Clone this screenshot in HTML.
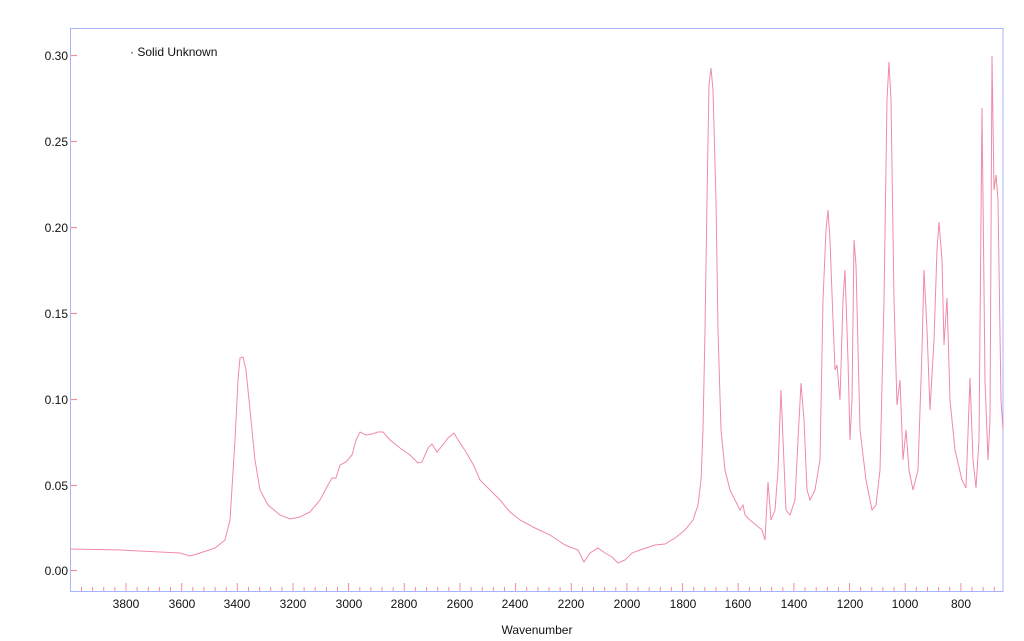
<!DOCTYPE html>
<html><head><meta charset="utf-8"><style>
html,body{margin:0;padding:0;background:#fff;}
svg{display:block;font-family:"Liberation Sans",Arial,sans-serif;}
</style></head><body>
<svg width="1024" height="641" viewBox="0 0 1024 641" xmlns="http://www.w3.org/2000/svg">
<rect x="70.5" y="28.5" width="932.5" height="563" fill="none" stroke="#a8b4ff" stroke-width="1"/>
<g stroke="#f0909a" stroke-width="1.2">
<line x1="71" y1="55.5" x2="77" y2="55.5"/><line x1="71" y1="141.5" x2="77" y2="141.5"/><line x1="71" y1="227.5" x2="77" y2="227.5"/><line x1="71" y1="313.5" x2="77" y2="313.5"/><line x1="71" y1="399.5" x2="77" y2="399.5"/><line x1="71" y1="485.5" x2="77" y2="485.5"/><line x1="71" y1="570.5" x2="77" y2="570.5"/>
</g>
<path stroke="#f0909a" stroke-width="1" fill="none" d="M81.5 591v-4M92.6 591v-4M103.7 591v-4M114.9 591v-4M126 591v-8M137.1 591v-4M148.3 591v-4M159.4 591v-4M170.5 591v-4M181.7 591v-8M192.8 591v-4M203.9 591v-4M215.1 591v-4M226.2 591v-4M237.3 591v-8M248.5 591v-4M259.6 591v-4M270.7 591v-4M281.9 591v-4M293 591v-8M304.1 591v-4M315.2 591v-4M326.4 591v-4M337.5 591v-4M348.6 591v-8M359.8 591v-4M370.9 591v-4M382 591v-4M393.2 591v-4M404.3 591v-8M415.4 591v-4M426.6 591v-4M437.7 591v-4M448.8 591v-4M460 591v-8M471.1 591v-4M482.2 591v-4M493.3 591v-4M504.5 591v-4M515.6 591v-8M526.7 591v-4M537.9 591v-4M549 591v-4M560.1 591v-4M571.3 591v-8M582.4 591v-4M593.5 591v-4M604.7 591v-4M615.8 591v-4M626.9 591v-8M638.1 591v-4M649.2 591v-4M660.3 591v-4M671.4 591v-4M682.6 591v-8M693.7 591v-4M704.8 591v-4M716 591v-4M727.1 591v-4M738.2 591v-8M749.4 591v-4M760.5 591v-4M771.6 591v-4M782.8 591v-4M793.9 591v-8M805 591v-4M816.2 591v-4M827.3 591v-4M838.4 591v-4M849.5 591v-8M860.7 591v-4M871.8 591v-4M882.9 591v-4M894.1 591v-4M905.2 591v-8M916.3 591v-4M927.5 591v-4M938.6 591v-4M949.7 591v-4M960.9 591v-8M972 591v-4M983.1 591v-4M994.3 591v-4"/>
<g font-size="12" fill="#111" text-anchor="end">
<text x="68" y="60">0.30</text><text x="68" y="146">0.25</text><text x="68" y="232">0.20</text><text x="68" y="318">0.15</text><text x="68" y="404">0.10</text><text x="68" y="490">0.05</text><text x="68" y="575">0.00</text>
</g>
<g font-size="12" fill="#111" text-anchor="middle">
<text x="126" y="608">3800</text><text x="182" y="608">3600</text><text x="237" y="608">3400</text><text x="293" y="608">3200</text><text x="349" y="608">3000</text><text x="404" y="608">2800</text><text x="460" y="608">2600</text><text x="515" y="608">2400</text><text x="571" y="608">2200</text><text x="627" y="608">2000</text><text x="683" y="608">1800</text><text x="738" y="608">1600</text><text x="794" y="608">1400</text><text x="850" y="608">1200</text><text x="905" y="608">1000</text><text x="961" y="608">800</text>
<text x="537" y="634">Wavenumber</text>
</g>
<text x="130" y="56" font-size="12" fill="#111">· Solid Unknown</text>
<polyline fill="none" stroke="#f08aa8" stroke-width="1" points="70,549 120,550 180,553 190,556 200,553 215,548 225,540 230,520 235,440 238,380 240,358 243,357 246,370 250,410 255,460 260,490 268,505 280,515 290,519 300,517 310,512 320,500 328,485 332,478 336,478 340,465 346,462 352,455 356,440 360,432 366,435 372,434 378,432 383,432 390,440 400,448 410,455 418,463 422,462 428,448 432,444 437,452 442,446 448,438 454,433 458,440 466,452 474,466 480,480 490,490 500,500 510,512 520,520 535,528 550,535 565,545 578,550 584,562 590,553 598,548 605,553 612,557 618,563 625,560 632,553 640,550 655,545 665,544 675,538 685,530 693,520 698,505 701,480 703,430 705,330 707,200 709,85 711,68 713,90 716,200 718,330 721,430 725,470 730,490 735,500 740,510 743,505 745,515 750,520 756,525 762,530 765,540 768,482 771,520 775,510 778,470 781,390 783,440 786,510 790,515 795,500 798,440 801,383 804,420 807,490 810,500 815,490 820,460 823,300 826,230 828,210 830,240 833,320 835,370 837,365 840,400 843,300 845,270 848,360 850,440 852,400 854,240 856,265 860,430 866,480 872,510 876,505 880,470 884,300 887,100 889,62 891,100 894,300 897,405 900,380 903,460 906,430 909,470 913,490 918,470 922,350 924,270 927,330 930,410 934,340 937,250 939,222 942,260 944,345 947,298 950,400 955,450 962,480 966,488 970,378 973,460 976,488 979,440 982,108 985,380 988,460 990,420 992,56 994,190 996,175 998,200 1001,400 1003,430"/>
</svg>
</body></html>
